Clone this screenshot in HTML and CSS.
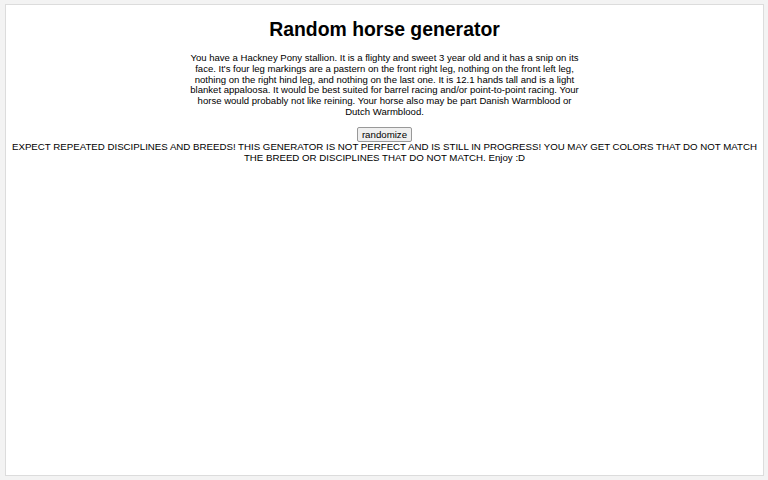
FILE: index.html
```html
<!DOCTYPE html>
<html lang="en">
<head>
    <meta charset="UTF-8">
    <meta name="viewport" content="width=device-width, initial-scale=1.0">
    <title>Random horse generator</title>
    <link rel="stylesheet" href="styles.css">
</head>
<body>
    <div class="frame">
        <h1>Random horse generator</h1>

        <p id="horse">You have a Hackney Pony stallion. It is a flighty and sweet 3 year old and it has a snip on its face. It's four leg markings are a pastern on the front right leg, nothing on the front left leg, nothing on the right hind leg, and nothing on the last one. It is 12.1 hands tall and is a light blanket appaloosa. It would be best suited for barrel racing and/or point-to-point racing. Your horse would probably not like reining. Your horse also may be part Danish Warmblood or Dutch Warmblood.</p>

        <button type="button" id="randomize">randomize</button>
        <div class="note">EXPECT REPEATED DISCIPLINES AND BREEDS! THIS GENERATOR IS NOT PERFECT AND IS STILL IN PROGRESS! YOU MAY GET COLORS THAT DO NOT MATCH THE BREED OR DISCIPLINES THAT DO NOT MATCH. Enjoy :D</div>
    </div>
</body>
</html>
```

FILE: styles.css
```css
html, body {
    height: 100%;
}
body {
    margin: 0;
    padding: 4px 4px 4px 5px;
    box-sizing: border-box;
    background-color: #f3f3f3;
    font-family: "Liberation Sans", Arial, sans-serif;
    color: #000;
}
.frame {
    height: 100%;
    box-sizing: border-box;
    background-color: #fff;
    border: 1px solid #dcdcdc;
    padding: 0 4px;
    text-align: center;
}
h1 {
    font-size: 19.4px;
    margin: 13px 0 12px;
}
#horse {
    font-size: 9.55px;
    line-height: 10.8px;
    max-width: 392px;
    margin: 0 auto 6px;
}
button {
    font-family: "Liberation Sans", Arial, sans-serif;
    font-size: 9.7px;
    padding: 1px 4px;
    background-color: #efefef;
    border: 1px solid #999;
    border-radius: 2px;
    color: #000;
}
.note {
    font-size: 9.7px;
    line-height: 10.8px;
}
```
